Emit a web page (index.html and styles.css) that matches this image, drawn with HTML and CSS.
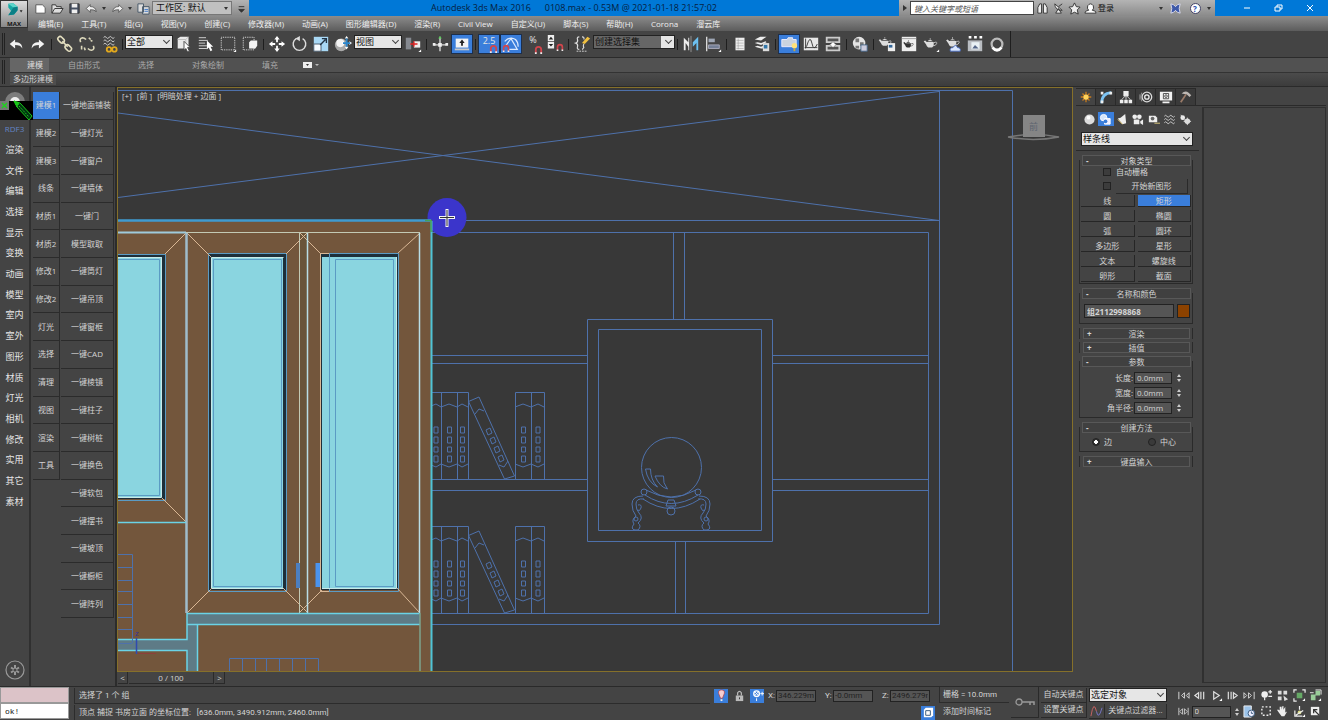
FILE: index.html
```
<!DOCTYPE html>
<html lang="zh-CN">
<head>
  <meta charset="UTF-8">
  <meta name="viewport" content="width=device-width, initial-scale=1.0">
  <title>Autodesk 3ds Max 2016 - 0108.max</title>
  <link rel="stylesheet" href="styles.css">
</head>
<body>

<!-- Shared icon shapes -->
<svg class="sprite" aria-hidden="true">
  <symbol id="undo" viewBox="0 0 20 20"><path d="M3 10l6-5v3c5 0 8 2 8 7-1-3-4-4-8-4v4z" fill="#f2f2f2"/></symbol>
  <symbol id="redo" viewBox="0 0 20 20"><path d="M17 10l-6-5v3c-5 0-8 2-8 7 1-3 4-4 8-4v4z" fill="#f2f2f2"/></symbol>
  <symbol id="teapot" viewBox="0 0 20 20"><path d="M5 8h9q1 5-2 7H7Q5 14 4 11L1 7l2-1zM6 7q3-3 7 0zM9 3h1v2H9z" fill="currentColor"/><path d="M14 9q5-2 4 1-1 3-5 3" fill="none" stroke="currentColor"/></symbol>
  <symbol id="magnet" viewBox="0 0 10 10"><path d="M2 9V5q0-3 3-3t3 3v4" fill="none" stroke="#d2454c" stroke-width="2"/><path d="M1 8h2v2H1zM7 8h2v2H7z" fill="#eee"/></symbol>
  <symbol id="waves" viewBox="0 0 20 20"><path d="M2 5q2-3 4 0t4 0 4 0 4 0M2 10q2-3 4 0t4 0 4 0 4 0M2 15q2-3 4 0t4 0 4 0 4 0" fill="none" stroke="currentColor" stroke-width="1.3"/></symbol>
</svg>

<div class="app">

  <!-- Title bar and menu -->
  <header class="header">
    <button class="logo" aria-label="MAX">
      <svg viewBox="0 0 28 28"><path d="M6 4l7-1 6 5v5l-5 6-8 1 4-6-4-5z" fill="#17a9a4"/><path d="M6 4l7-1 6 5-6 1z" fill="#5bd6cb"/><path d="M13 9l6-1v5l-5 6-8 1 4-6z" fill="#0c7f86"/><path d="M22 13h4l-2 3z" fill="#222"/></svg>
      <span>MAX</span>
    </button>
    <div class="header-rows">
      <div class="titlebar">
        <div class="quick">
          <button aria-label="新建"><svg viewBox="0 0 14 14"><path d="M2 3h7l3 3v6H2z" fill="#fff" stroke="#555"/></svg></button>
          <button aria-label="打开"><svg viewBox="0 0 14 14"><path d="M1 12V3h4l1 2h5v2M1 12l3-5h9l-3 5z" fill="#ddd" stroke="#333"/></svg></button>
          <button aria-label="保存"><svg viewBox="0 0 14 14"><path d="M2 2h10v10H2z" fill="#465062" stroke="#333"/><path d="M4 2h6v4H4zM4 8h6v4H4z" fill="#eee"/></svg></button>
          <button aria-label="撤消"><svg viewBox="0 0 20 20"><path d="M2 10l6-6v3c6 0 9 3 9 8-2-3-4-3-9-3v4z" fill="#eee" stroke="#333"/></svg></button>
          <i class="tri"></i>
          <button aria-label="重做"><svg viewBox="0 0 20 20"><path d="M18 10l-6-6v3c-6 0-9 3-9 8 2-3 4-3 9-3v4z" fill="#eee" stroke="#333"/></svg></button>
          <i class="tri"></i>
          <button aria-label="项目文件夹"><svg viewBox="0 0 14 14"><path d="M1 2h6v9H1zM6 5h7v8H6z" fill="#ddd" stroke="#456"/><path d="M8 8h4M8 10h4" stroke="#3874c8"/></svg></button>
          <button class="workspace-pick">工作区: 默认<i class="tri"></i></button>
          <button aria-label="自定义快速访问"><svg viewBox="0 0 14 14"><path d="M4 5h6M4 8h6l-3 3z" stroke="#333" fill="#333"/></svg></button>
        </div>
        <h1 class="title"><span>Autodesk 3ds Max 2016</span><span>0108.max - 0.53M @ 2021-01-18 21:57:02</span></h1>
        <div class="search">
          <i class="tri side"></i>
          <input type="text" placeholder="键入关键字或短语" aria-label="搜索">
          <button aria-label="查找"><svg viewBox="0 0 14 14"><path d="M2 12V6l2-4h2v10zM8 12V2h2l2 4v6z" fill="#eee" stroke="#333"/></svg></button>
          <button aria-label="通讯中心"><svg viewBox="0 0 14 14"><path d="M3 2q0 7 8 7zM4 12h6l-3-5zM7 5l4-3" fill="#eee" stroke="#333"/></svg></button>
          <button aria-label="收藏夹"><svg viewBox="0 0 14 14"><path d="M7 1l2 4 4 .5-3 3 1 4.500-4-2-4 2 1-4.500-3-3 4-.5z" fill="#eee" stroke="#333"/></svg></button>
          <button aria-label="帐户"><svg viewBox="0 0 14 14"><path d="M1 12q0-3 4-3-2-2-1-5 3-4 6 0 1 3-1 5 4 0 4 3z" fill="#fff" stroke="#333"/></svg></button>
          <button class="signin">登录<i class="tri"></i></button>
          <button aria-label="Exchange"><svg viewBox="0 0 14 14"><path d="M2 2l3 1 2 2 2-2 3-1-1 5 1 5-3-1-2-2-2 2-3 1 1-5z" fill="#3d58a8" stroke="#dde"/></svg></button>
          <button class="help" aria-label="帮助"><span>?</span></button>
          <i class="tri"></i>
        </div>
        <div class="window-buttons">
          <button aria-label="最小化"><svg viewBox="0 0 10 10"><path d="M2 5h6" stroke="#fff"/></svg></button>
          <button aria-label="还原"><svg viewBox="0 0 10 10"><path d="M2 4h5v4H2zM4 4V2h5v4H7" fill="none" stroke="#fff"/></svg></button>
          <button aria-label="关闭"><svg viewBox="0 0 10 10"><path d="M2 2l6 6M8 2L2 8" stroke="#fff"/></svg></button>
        </div>
      </div>
      <nav class="menu">
        <a href="#">编辑(E)</a><a href="#">工具(T)</a><a href="#">组(G)</a><a href="#">视图(V)</a><a href="#">创建(C)</a><a href="#">修改器(M)</a><a href="#">动画(A)</a><a href="#">图形编辑器(D)</a><a href="#">渲染(R)</a><a href="#">Civil View</a><a href="#">自定义(U)</a><a href="#">脚本(S)</a><a href="#">帮助(H)</a><a href="#">Corona</a><a href="#">溜云库</a>
      </nav>
    </div>
  </header>

  <!-- Main toolbar -->
  <div class="toolbar">
    <i class="grip"></i>
    <button aria-label="撤消"><svg><use href="#undo"/></svg></button>
    <button aria-label="重做"><svg><use href="#redo"/></svg></button>
    <i class="sep"></i>
    <button aria-label="链接"><svg viewBox="0 0 20 20"><g fill="none" stroke="#e4dfc0" stroke-width="1.800"><rect x="2" y="3" width="8" height="5" rx="2.500" transform="rotate(45 6 5)"/><rect x="10" y="12" width="8" height="5" rx="2.500" transform="rotate(45 14 14)"/><path d="M7 7l6 6"/></g></svg></button>
    <button aria-label="断开链接"><svg viewBox="0 0 20 20"><g fill="none" stroke="#dcd8bc" stroke-width="1.800"><path d="M3 8q-2-4 2-5 2 0 4 2M17 12q2 4-2 5-2 0-4-2M12 3l2 2M16 7l-2-1M4 12v4M8 17l-1-3"/></g></svg></button>
    <button aria-label="绑定到空间扭曲" class="light"><svg viewBox="0 0 20 20"><use href="#waves" width="20" height="15" y="-1"/><circle cx="10" cy="16" r="2.500" fill="none" stroke="#e3a91d" stroke-width="2"/><circle cx="16" cy="16" r="2.500" fill="none" stroke="#e3a91d" stroke-width="2"/></svg></button>
    <i class="sep"></i>
    <span class="drop"><select aria-label="选择过滤器"><option>全部</option></select></span>
    <button aria-label="选择对象"><svg viewBox="0 0 20 20"><path d="M3 4l3-2h9v10l-3 3H3z" fill="#e9e9e9"/><path d="M12 5v10M3 5h9l3-3" stroke="#bbb" fill="none"/><path d="M10 7l7 7h-3l2 4-2 1-2-4-2 2z" fill="#fff" stroke="#444"/></svg></button>
    <button aria-label="按名称选择"><svg viewBox="0 0 20 20"><path d="M2 3h8M2 6h10M2 9h7M2 12h9M2 15h9" stroke="#ddd"/><path d="M11 6l7 7h-3l2 4-2 1-2-4-2 2z" fill="#fff"/></svg></button>
    <button aria-label="选择区域"><svg viewBox="0 0 20 20"><path d="M2.500 2.500h15v14h-15z" fill="none" stroke="#eee" stroke-dasharray="1 1"/><path d="M19 16v3h-3z" fill="#fff"/></svg></button>
    <button aria-label="窗口/交叉"><svg viewBox="0 0 20 20"><path d="M2.500 2.500h12v14h-12z" fill="none" stroke="#eee" stroke-dasharray="1 1"/><path d="M9 8l2-2h7v6l-2 3H9z" fill="#f4f4f4"/></svg></button>
    <i class="sep"></i>
    <button aria-label="选择并移动"><svg viewBox="0 0 20 20"><path d="M10 1l3 4h-2v3H9V5H7zM10 19l3-4h-2v-3H9v3H7zM1 10l4-3v2h3v2H5v2zM19 10l-4-3v2h-3v2h3v2z" fill="#fff"/></svg></button>
    <button aria-label="选择并旋转"><svg viewBox="0 0 20 20"><path d="M7 4a7 7 0 1 0 7 0" fill="none" stroke="#ddd" stroke-width="1.600"/><path d="M11 1l-5 3 5 3z" fill="#ddd"/></svg></button>
    <button aria-label="选择并缩放"><svg viewBox="0 0 20 20"><path d="M2 2h16v16H2z" fill="#a8d8f5"/><path d="M2 10h8v8H2z" fill="#f6fbff" stroke="#456"/><path d="M9 11l6-6M11 4h5v5" fill="none" stroke="#234" stroke-width="1.500"/></svg></button>
    <button aria-label="选择并放置"><svg viewBox="0 0 20 20"><circle cx="8" cy="11" r="7" fill="#a9a9a9"/><circle cx="7" cy="9" r="4.500" fill="#f4f4f4"/><path d="M14 1l2 3h-4zM14 16l2-3h-4zM8 9l3-2v4zM20 9l-3-2v4z" fill="#fff"/><path d="M14 4v9M10 9h8" stroke="#2a86cc" stroke-width="2"/></svg></button>
    <span class="drop"><select aria-label="参考坐标系"><option>视图</option></select></span>
    <button aria-label="使用轴点中心"><svg viewBox="0 0 20 20"><path d="M2 3h6v13H2z" fill="#858990"/><path d="M11 7h7v7h-7z" fill="#eee"/><path d="M7 10h8M11 7v6" stroke="#d22" stroke-width="1.500"/><path d="M19 16v3h-3z" fill="#fff"/></svg></button>
    <i class="sep"></i>
    <button aria-label="选择并操纵"><svg viewBox="0 0 20 20"><path d="M10 2v16M3 11h14" stroke="#ddd" stroke-width="1.500"/><path d="M8 9h4v4H8zM2 9h3v3H2zM16 9h3v3h-3z" fill="#eee"/><path d="M8 4l2-3 2 3z" fill="#5c5"/></svg></button>
    <button class="on" aria-label="键盘快捷键覆盖切换"><svg viewBox="0 0 20 20"><path d="M3 4h14v10H3z" fill="#f4f4f4"/><path d="M2 15h16v2H2z" fill="#c9c9c9"/><path d="M10 5l3 4h-2v3H9V9H7z" fill="#222"/></svg></button>
    <i class="sep"></i>
    <button class="on snap" aria-label="2.5 维捕捉">2.5<svg class="mag"><use href="#magnet"/></svg></button>
    <button class="on snap" aria-label="角度捕捉"><svg viewBox="0 0 20 20"><path d="M4 12L10 4l7 12H8M3 7q6-6 12-2 3 3 3 8" fill="none" stroke="#dceaff" stroke-width="1.300"/><use href="#magnet" width="9" height="9" y="10"/></svg></button>
    <button class="snap" aria-label="百分比捕捉">%<svg class="mag"><use href="#magnet"/></svg></button>
    <button class="snap" aria-label="微调器捕捉"><svg viewBox="0 0 20 20"><path d="M2 1h7v7H2zM2 9h7v7H2z" fill="#eee"/><path d="M3 6l2.500-3L8 6zM3 11l2.500 3L8 11z" fill="#222"/><use href="#magnet" width="9" height="9" x="11" y="10"/></svg></button>
    <i class="sep"></i>
    <button aria-label="编辑命名选择集"><svg viewBox="0 0 20 20"><path d="M7 2Q4 2 5 5t-2 4q3 1 2 4t2 3M10 2q3 0 2 3M12 10q-1 2 0 4-1 2-2 2" fill="none" stroke="#ddd" stroke-width="1.300"/><path d="M10 9l6-7 3 2-6 6z" fill="#f0c040"/><path d="M4 18h11" stroke="#ddd" stroke-dasharray="2 1"/></svg></button>
    <span class="drop sets"><select aria-label="命名选择集"><option>创建选择集</option></select></span>
    <i class="sep"></i>
    <button aria-label="镜像"><svg viewBox="0 0 20 20"><path d="M2 3l5 5V3h1v14H7v-4L4 9v8H2z" fill="#eee"/><path d="M10 1v18" stroke="#999"/><path d="M18 2v15h-2V9l-4 4v4-9z" fill="#6cc0f0"/></svg></button>
    <button aria-label="对齐"><svg viewBox="0 0 20 20"><path d="M3 2v16" stroke="#ddd" stroke-width="1.500"/><path d="M5 4h7v4H5z" fill="#9fa7b6"/><path d="M5 11h12v4H5z" fill="#747f96" stroke="#aab"/><path d="M19 16v3h-3z" fill="#fff"/></svg></button>
    <i class="sep"></i>
    <button aria-label="图层"><svg viewBox="0 0 20 20"><path d="M5 3h10v14H5z" fill="#eee"/><path d="M6 6h8M6 9h8M6 12h8M6 15h8M8 4v12" stroke="#999" stroke-width=".6"/></svg></button>
    <button aria-label="层管理器"><svg viewBox="0 0 20 20"><path d="M2 5l6-3h7l-6 4zM2 9l3-1 4 1 5-2 1 1-6 3zM2 13l3-1 4 1 2-1v3H9z" fill="#eee"/><path d="M11 9h7v9h-7z" fill="#ddd"/><path d="M12 11h4v4h-4z" fill="#37a"/></svg></button>
    <i class="sep"></i>
    <button class="on" aria-label="功能区"><svg viewBox="0 0 20 20"><path d="M2 5h6l1-2h5v2h4v8H2z" fill="#c9d3df" stroke="#eef"/><circle cx="16" cy="12" r="3" fill="#ffe27a"/><path d="M15 15h2v3h-2z" fill="#c9a63a"/></svg></button>
    <button aria-label="曲线编辑器"><svg viewBox="0 0 20 20"><path d="M2 3h16v14H2z" fill="#e6e6e6"/><path d="M4 15V4M3 14h14M5 13Q9-1 11 9t6 1" fill="none" stroke="#333"/></svg></button>
    <button aria-label="图解视图"><svg viewBox="0 0 20 20"><path d="M2 2h16v7H2zM2 11h16v7H2z" fill="#ccc"/><path d="M4 4h12v3H4zM4 13h12v3H4z" fill="#555"/><path d="M8 8h4v2h2l-4 4-4-4h2z" fill="#fff" stroke="#444" stroke-width=".5"/></svg></button>
    <i class="sep"></i>
    <button aria-label="材质编辑器"><svg viewBox="0 0 20 20"><circle cx="9" cy="9" r="7" fill="#e4e4e4"/><path d="M5 4h4v4H5zM10 8h4v4h-4zM5 12h4v3H5z" fill="#777"/><path d="M11 11h7v7h-7z" fill="#ccd" stroke="#468"/></svg></button>
    <i class="sep"></i>
    <button aria-label="渲染设置" class="light"><svg viewBox="0 0 20 20"><use href="#teapot" width="16" height="16"/><path d="M11 9h8v9h-8z" fill="#eee"/><path d="M12 11h4v3h-4z" fill="#369"/></svg></button>
    <button aria-label="渲染帧窗口" class="dark"><svg viewBox="0 0 20 20"><path d="M2 2h16v16H2z" fill="#eee"/><path d="M2 4h16" stroke="#999"/><use href="#teapot" x="3" y="4" width="13" height="13"/></svg></button>
    <button aria-label="渲染产品" class="light"><svg viewBox="0 0 20 20"><use href="#teapot" x="1" y="1" width="17" height="17"/><path d="M19 16v3h-3z" fill="#fff"/></svg></button>
    <button aria-label="云渲染" class="light"><svg viewBox="0 0 20 20"><use href="#teapot" width="20" height="17"/><path d="M7 18q-1-4 3-4 3-5 5 0 4 0 3 4z" fill="#dce8ff" stroke="#4668b8"/></svg></button>
    <button aria-label="渲染库"><svg viewBox="0 0 20 20"><path d="M3 1h3v3H3zM9 1h3v3H9zM15 1h3v3h-3z" fill="#fff"/><path d="M2 6h16v12H2z" fill="#b9bdc2"/><path d="M6 8h9v8H6z" fill="#e9f1f5"/><path d="M7 15l3-4 4 4z" fill="#568"/></svg></button>
    <button aria-label="Corona"><svg viewBox="0 0 20 20"><circle cx="10" cy="10" r="6" fill="none" stroke="#bbb" stroke-width="2.500"/><path d="M5 14q5 6 10 0" fill="none" stroke="#fff" stroke-width="3"/></svg></button>
    <i class="sep end"></i>
  </div>

  <!-- Ribbon -->
  <div class="ribbon">
    <i class="grip"></i>
    <div class="ribbon-body">
      <div class="ribbon-tabs">
        <button class="active">建模</button><button>自由形式</button><button>选择</button><button>对象绘制</button><button>填充</button>
        <button class="ribbon-min" aria-label="最小化功能区"><svg viewBox="0 0 18 8"><path d="M1 1h9v6H1z" fill="#eee"/><path d="M4 3h3L5.500 5z" fill="#333"/><path d="M13 3h4l-2 2z" fill="#bbb"/></svg></button>
      </div>
      <div class="ribbon-panel"><button>多边形建模</button></div>
    </div>
  </div>

  <main class="work">

    <!-- Script categories -->
    <aside class="rail">
      <button class="rail-logo" aria-label="关闭"><svg viewBox="0 0 34 34"><circle cx="15" cy="15" r="10" fill="#7d7d7d"/><circle cx="15" cy="15" r="5" fill="#eee"/><path d="M0 14h33v19H0z" fill="#000"/><path d="M0 14h9v9H0z" fill="#777"/><path d="M2 16l5 5M7 16l-5 5" stroke="#1fd01f" stroke-width="1.500"/><path d="M14 14l6 2 12 13-3 4-12-13z" fill="#031" stroke="#18c818"/><path d="M14 14l5 2-2 4zM19 19l10 11" fill="#18c818" stroke="#18c818" stroke-dasharray="2 1"/></svg></button>
      <div class="rail-list">
        <button class="brand">RDF3</button>
        <button>渲染</button><button>文件</button><button>编辑</button><button>选择</button><button>显示</button><button>变换</button><button>动画</button><button>模型</button><button>室内</button><button>室外</button><button>图形</button><button>材质</button><button>灯光</button><button>相机</button><button>修改</button><button>实用</button><button>其它</button><button>素材</button>
      </div>
      <button class="gear" aria-label="设置"><svg viewBox="0 0 20 20"><circle cx="10" cy="10" r="9" fill="none" stroke="#999" stroke-width="1.200"/><path d="M10 5v10M6 7.500l8 5M14 7.500l-8 5" stroke="#999" stroke-width="2"/><circle cx="10" cy="10" r="1.500" fill="#444"/></svg></button>
    </aside>

    <!-- One-key commands -->
    <aside class="commands">
      <div class="command-col groups">
        <button class="on">建模1</button><button>建模2</button><button>建模3</button><button>线条</button><button>材质1</button><button>材质2</button><button>修改1</button><button>修改2</button><button>灯光</button><button>选择</button><button>清理</button><button>视图</button><button>渲染</button><button>工具</button>
      </div>
      <div class="command-col">
        <button>一键地面铺装</button><button>一键灯光</button><button>一键窗户</button><button>一键墙体</button><button>一键门</button><button>模型取取</button><button>一键筒灯</button><button>一键吊顶</button><button>一键窗框</button><button>一键CAD</button><button>一键棱镜</button><button>一键柱子</button><button>一键树桩</button><button>一键换色</button><button>一键软包</button><button>一键摆书</button><button>一键坡顶</button><button>一键橱柜</button><button>一键阵列</button>
      </div>
    </aside>

    <!-- Viewport -->
    <section class="stage">
      <div class="viewport">
        <svg class="scene" viewBox="118 88 954 583" preserveAspectRatio="xMinYMin slice">
          <g class="wire">
            <path d="M118 90.500H1012.500V672M939.500 90.500V624.500H431M118 113L939 220.500M118 197.500L939 91.500M431 220.500H939"/>
            <path d="M431 232.500H928.500V613.500H431M673.500 232V320M684.500 232V320M675.500 541V613M685.500 541V613"/>
            <path d="M587.500 319.500H772.500V541.500H587.500zM598.500 329.500H761.500V530.500H598.500z"/>
            <path d="M431 355.500H587M431 363.500H587M772 355.500H928M772 363.500H928M431 479.500H587M431 490.500H587M772 479.500H928M772 490.500H928"/>
            <!-- Books, one row per shelf -->
            <g id="books">
              <path d="M431 392.500H468.500V479M441.500 392V479M457.500 392V479M515.500 479V392.500H544.500V479M531.500 392V479"/>
              <path d="M431 406l5-2 5 3 8-3 8 3 5-3 6 3M431 465l5 2 5-3 8 3 8-3 5 3 6-3M515 407l8-3 8 3 7-3 6 3M515 464l8 3 8-3 7 3 6-3"/>
              <path d="M434 427h4v6h-4zm0 10h4v6h-4zm0 10h4v5h-4zm0 9h4v6h-4zM447.500 427h4v6h-4zm0 10h4v6h-4zm0 10h4v5h-4zm0 9h4v6h-4zM460.500 427h4v6h-4zm0 10h4v6h-4zm0 10h4v5h-4zm0 9h4v6h-4zM521.500 427h4v6h-4zm0 10h4v6h-4zm0 10h4v5h-4zm0 9h4v6h-4zM536 427h4v6h-4zm0 10h4v6h-4zm0 10h4v5h-4zm0 9h4v6h-4z"/>
              <path d="M468.500 401.500L479 397l35.500 79-10 3zM475 414l4-5 5 2M499 465l5 2 4-6"/>
              <path d="M486 430l4-2 2 5-4 2zm4 9l4-2 2 5-4 2zm4 9l4-2 2 5-4 2zm4 9l4-2 2 5-4 2z"/>
            </g>
            <use href="#books" y="134"/>
            <!-- Crystal ball and its stand -->
            <circle cx="671.500" cy="467.500" r="30"/>
            <path d="M645.500 469h5q0 11 7 18-10-5-12-18zM655 476h8.500q-1 7 4 13-8-2-12.500-13z"/>
            <path d="M645 495q26 17 53 0M643 499q28 19 57 0M646 490q25 14 50 0"/>
            <circle cx="644" cy="492" r="3"/><circle cx="698" cy="492" r="3"/><circle cx="671" cy="511" r="4"/>
            <path d="M668 500h6l2 6h-10zM643 496q-11 0-11 8 0 7 4 12-5 4-2 8-4 5 1 6h3q4-4 0-7 6-5 1-10-3-3-3-9t8-5M699 496q11 0 11 8 0 7-4 12 5 4 2 8 4 5-1 6h-3q-4-4 0-7-6-5-1-10 3-3 3-9t-8-5M638 505q4-1 3 3t-4 2M704 505q-4-1-3 3t4 2"/>
            <circle cx="636" cy="519" r="2"/><circle cx="706" cy="519" r="2"/>
          </g>

          <circle cx="447" cy="217.500" r="19.500" fill="#3b35cb"/>

          <!-- Cabinet -->
          <path d="M118 220H432V672H118z" fill="#73563c"/>
          <path d="M300 233h8v380h-8z" fill="#69543a"/>
          <path d="M187 614H420V624.500H197V672H187V650H118V639.500H187z" fill="#5e7b86"/>
          <g fill="#1d2f3a">
            <path d="M118 254H165V499H118zM209 254H286V590H209zM321 254H399V590H321z"/>
          </g>
          <g fill="#8ad5e0">
            <path d="M118 257H162V497H118zM211.500 257.500H283V588H211.500zM322 257H396.500V588H322z"/>
          </g>
          <g class="wire pane">
            <path d="M118 259.500H159.500V495.500H118M213.500 259.500H281.500V586.500H213.500zM335.500 259.500H393.500V586.500H335.500zM329.500 254V592"/>
            <path d="M118 254.500H165.500V500.500H118M208.500 253.500H286.500V591.500H208.500zM320.500 253.500H398.500V591.500H320.500z"/>
          </g>
          <g fill="none" stroke="#c9e9ea">
            <path d="M118 257.500H161.500V497.500H118M211.500 588V257.500H283.500M211.500 588.500H283M322 588.500H396.500V257"/>
          </g>
          <g fill="none" stroke="#d9b795">
            <path d="M165 254l21-21M162 498l24 24M187 233l24 24M286 254l21-21M212 588l-25 25M283 588l25 25M300 233l21 21M398 253l22-20M322 590l-23 23M397 588l22 24M320.500 591V253.500H329M320 591.500h9"/>
          </g>
          <path d="M299.500 233V613M118 232.500H420" fill="none" stroke="#c3c9b4"/>
          <path d="M118 232.500H186" stroke="#9fcbdc" stroke-width="2"/>
          <path d="M186.500 233V613" stroke="#9fbccb" stroke-width="2.500"/>
          <path d="M307.500 233V613M419.500 233V613" stroke="#b9dde6" stroke-width="1.500"/>
          <g fill="none" stroke="#6ad3e6" stroke-width="1.500">
            <path d="M118 522.500H186M187 613.500H420M187 624.500H420M197.500 625V672M118 639.500H187V613M118 650.500H187V672"/>
          </g>
          <path d="M420 613V672" stroke="#7da58e" stroke-width="1.500"/>
          <path d="M118 220.500H431" stroke="#3f9bd0" stroke-width="2.500"/>
          <path d="M431.500 221V672" stroke="#4fc3d6" stroke-width="2"/>
          <path d="M425 220.500H431V232" fill="none" stroke="#46a05a" stroke-width="1.500"/>
          <path d="M296 563h4v25h-4z" fill="#4c7fc0"/><path d="M315.500 563h4.500v24h-4.500z" fill="#4a93ee"/>
          <g class="wire">
            <path d="M118 554.500H132.500V643M118 567.500H132M118 580.500H132M118 591.500H132M118 604.500H132M118 617.500H132M118 629.500H132M118 643.500H132"/>
            <path d="M229.500 672V658.500H318.500V672M242.500 658V672M255.500 658V672M266.500 658V672M279.500 658V672M292.500 658V672M305.500 658V672"/>
          </g>
          <path d="M136.500 638V654" stroke="#2f4bb0" stroke-width="1.500"/><path d="M138 653.500H156" stroke="#8c3f3a"/>
          <text x="135" y="636" font-size="8" fill="#33309c">z</text>

          <!-- Cursor -->
          <path d="M447 209V227M439 217.500H455" stroke="#f4f4f4" stroke-width="3"/><path d="M447 210V226M440 217.500H454" stroke="#333"/>

          <!-- View cube -->
          <path d="M1008 137q26-5 51 0-26 5-51 0" fill="none" stroke="#777" stroke-width="1.500"/>
          <path d="M1023 115h22v22h-22z" fill="#858585"/>
          <text x="1029" y="130" font-size="9" fill="#5d6470">前</text>
        </svg>
        <div class="viewport-label"><span>[+]</span><span>[前 ]</span><span>[明暗处理 + 边面 ]</span></div>
      </div>
      <div class="timeline">
        <button aria-label="上一帧">&lt;</button><button class="frame">0 / 100</button><button aria-label="下一帧">&gt;</button>
      </div>
    </section>

    <!-- Command panel -->
    <aside class="panel">
      <div class="panel-tabs">
        <button class="active" aria-label="创建"><svg viewBox="0 0 16 16"><path d="M8 2v12M2 8h12M4 4l8 8M12 4l-8 8" stroke="#c77a1c" stroke-width="1.500"/><circle cx="8" cy="8" r="3" fill="#ffd35a"/></svg></button>
        <button aria-label="修改"><svg viewBox="0 0 16 16"><path d="M3 15Q3 4 14 3" fill="none" stroke="#7cc4f4" stroke-width="3"/><path d="M2 2h3v3H2zM12 2h3v3h-3zM2 12h3v3H2z" fill="#eee"/></svg></button>
        <button aria-label="层次"><svg viewBox="0 0 16 16"><path d="M5 1h6v6H5zM1 11h4v4H1zM6 11h4v4H6zM11 11h4v4h-4z" fill="#eee"/><path d="M8 6v5M8 6l-5 5M8 6l5 5" stroke="#ddd"/></svg></button>
        <button aria-label="运动"><svg viewBox="0 0 16 16"><circle cx="9" cy="8" r="5.500" fill="none" stroke="#ddd" stroke-width="1.500"/><circle cx="9" cy="8" r="2.500" fill="none" stroke="#eee" stroke-width="1.500"/><path d="M3 3q-2 5 0 10M1 5v6" stroke="#999" fill="none"/></svg></button>
        <button aria-label="显示"><svg viewBox="0 0 16 16"><path d="M1 2h14v10H1zM4 13h8v2H4z" fill="#f2f2f2"/><path d="M5 4h6v6H5z" fill="none" stroke="#444"/><circle cx="8" cy="7" r="1.500" fill="none" stroke="#444"/></svg></button>
        <button aria-label="实用程序"><svg viewBox="0 0 16 16"><path d="M3 4q4-4 8-1l3 3-2 2-3-3z" fill="#bdb8b4"/><path d="M8 5l-6 9" stroke="#9a7a68" stroke-width="2"/></svg></button>
      </div>
      <div class="panel-body">
        <div class="panel-main">
          <div class="kinds">
            <button aria-label="几何体"><svg viewBox="0 0 14 14"><circle cx="7" cy="7" r="5.500" fill="#dcdcdc"/><circle cx="6" cy="5" r="2" fill="#fff"/></svg></button>
            <button class="on" aria-label="图形"><svg viewBox="0 0 14 14"><circle cx="5" cy="5" r="3.500" fill="#d5e5fb" stroke="#fff"/><path d="M6 6h6v6H6z" fill="#eef" stroke="#fff"/><circle cx="7" cy="9" r="2" fill="#357bd8"/></svg></button>
            <button aria-label="灯光"><svg viewBox="0 0 14 14"><path d="M11 1l1 10-4 1-5-6 3-1z" fill="#eee"/><path d="M3 7l5 5" stroke="#e3c56a"/></svg></button>
            <button aria-label="摄影机"><svg viewBox="0 0 14 14"><circle cx="4" cy="4" r="2.500" fill="#eee"/><circle cx="9" cy="4" r="2.500" fill="#eee"/><path d="M3 7h6v5H3zM10 9l3-2v6l-3-2z" fill="#eee"/></svg></button>
            <button aria-label="辅助对象"><svg viewBox="0 0 14 14"><path d="M2 3h7l2 2v5H2z" fill="#eee"/><circle cx="6" cy="6" r="2" fill="#666"/><path d="M8 11h6" stroke="#ddc97c"/></svg></button>
            <button class="light" aria-label="空间扭曲"><svg><use href="#waves"/></svg></button>
            <button aria-label="系统"><svg viewBox="0 0 14 14"><circle cx="4" cy="5" r="2.500" fill="#eee"/><circle cx="9" cy="9" r="3" fill="#ddd"/><path d="M9 5v8M5 9h8M2 2l4 6" stroke="#ddd"/></svg></button>
          </div>
          <span class="drop wide"><select aria-label="图形类别"><option>样条线</option></select></span>
          <hr>

          <section class="rollup">
            <h2><span>-</span>对象类型</h2>
            <div class="rollup-body types">
              <label class="check"><input type="checkbox">自动栅格</label>
              <div class="start"><input type="checkbox" aria-label="开始新图形"><button>开始新图形</button></div>
              <div class="type-grid">
                <button>线</button><button class="on">矩形</button>
                <button>圆</button><button>椭圆</button>
                <button>弧</button><button>圆环</button>
                <button>多边形</button><button>星形</button>
                <button>文本</button><button>螺旋线</button>
                <button>卵形</button><button>截面</button>
              </div>
            </div>
          </section>

          <section class="rollup">
            <h2><span>-</span>名称和颜色</h2>
            <div class="rollup-body name-row">
              <input type="text" value="组2112998868" aria-label="名称"><button class="swatch" aria-label="颜色"></button>
            </div>
          </section>

          <section class="rollup closed"><h2><span>+</span>渲染</h2></section>
          <section class="rollup closed"><h2><span>+</span>插值</h2></section>

          <section class="rollup">
            <h2><span>-</span>参数</h2>
            <div class="rollup-body params">
              <label>长度:<input type="text" value="0.0mm"><i class="spin"></i></label>
              <label>宽度:<input type="text" value="0.0mm"><i class="spin"></i></label>
              <label>角半径:<input type="text" value="0.0mm"><i class="spin"></i></label>
            </div>
          </section>

          <section class="rollup">
            <h2><span>-</span>创建方法</h2>
            <div class="rollup-body method">
              <label><input type="radio" name="method" checked>边</label>
              <label><input type="radio" name="method">中心</label>
            </div>
          </section>

          <section class="rollup closed"><h2><span>+</span>键盘输入</h2></section>
        </div>
        <div class="panel-side"></div>
      </div>
    </aside>
  </main>

  <!-- Status bar -->
  <footer class="status">
    <div class="listener">
      <input type="text" class="pink" aria-label="宏录制器">
      <input type="text" value="ok!" aria-label="侦听器">
    </div>
    <div class="messages">
      <div class="status-row">
        <p class="well">选择了 1 个 组</p>
        <button class="on" aria-label="孤立当前选择"><svg viewBox="0 0 14 14"><path d="M7 1q4 0 3 4L8 10H6L4 5q-1-4 3-4z" fill="#f6cdd2" stroke="#b33" stroke-width=".7"/><path d="M6 11h2v2H6z" fill="#eee"/></svg></button>
        <button aria-label="选择锁定"><svg viewBox="0 0 14 14"><path d="M3 7h8v6H3z" fill="#bbb"/><path d="M5 7V4q2-3 4 0v3" fill="none" stroke="#bbb" stroke-width="1.300"/><path d="M7 9v2" stroke="#333"/></svg></button>
        <button class="on" aria-label="绝对模式"><svg viewBox="0 0 14 14"><circle cx="6" cy="5" r="3" fill="none" stroke="#fff" stroke-width="1.500"/><path d="M4 3l4 4M8 3L4 7M10 5h4M12 3v4M6 10v3" stroke="#fff"/></svg></button>
        <label>X:<input type="text" value="346.229mm"></label>
        <label>Y:<input type="text" value="-0.0mm"></label>
        <label>Z:<input type="text" value="2496.279mm"></label>
      </div>
      <div class="status-row">
        <p class="well">顶点 捕捉 书房立面 的坐标位置:&nbsp;&nbsp; [636.0mm, 3490.912mm, 2460.0mm]</p>
        <button class="on" aria-label="自适应降级"><svg viewBox="0 0 14 14"><path d="M2 4l2-2h8v8l-2 2H2z" fill="#fff"/><path d="M4 5h5v5H4z" fill="#fff" stroke="#357"/></svg></button>
      </div>
    </div>
    <div class="grid-info">
      <p class="well">栅格 = 10.0mm</p>
      <button>添加时间标记</button>
    </div>
    <button class="key" aria-label="设置关键点"><svg viewBox="0 0 20 10"><circle cx="4" cy="5" r="3" fill="none" stroke="#999" stroke-width="1.300"/><path d="M7 5h12v3M15 5v3" fill="none" stroke="#999" stroke-width="1.500"/></svg></button>
    <div class="keys">
      <button>自动关键点</button>
      <button>设置关键点</button>
    </div>
    <div class="keys filters">
      <span class="drop"><select aria-label="关键点对象"><option>选定对象</option></select></span>
      <div class="filter-row">
        <button aria-label="切线"><svg viewBox="0 0 14 14"><path d="M1 12Q4-6 7 7" fill="none" stroke="#c66"/><path d="M7 7q2 10 6-4" fill="none" stroke="#77c"/></svg></button>
        <button>关键点过滤器...</button>
      </div>
    </div>
    <div class="playback">
      <button aria-label="转至开头"><svg viewBox="0 0 14 14"><path d="M2 3v8M8 4L5 7l3 3zM13 4l-3 3 3 3z" stroke="#ddd" fill="none"/></svg></button>
      <button aria-label="上一帧"><svg viewBox="0 0 14 14"><path d="M6 4L2 7l4 3zM8.500 3v8M11.500 3v8" stroke="#ddd" fill="none" stroke-width="1.300"/></svg></button>
      <button aria-label="播放"><svg viewBox="0 0 14 14"><path d="M4 3l6 4-6 4z" stroke="#ddd" fill="none" stroke-width="1.300"/><path d="M13 10v3h-3z" fill="#fff"/></svg></button>
      <button aria-label="下一帧"><svg viewBox="0 0 14 14"><path d="M8 4l4 3-4 3zM5.500 3v8M2.500 3v8" stroke="#ddd" fill="none" stroke-width="1.300"/></svg></button>
      <button aria-label="转至结尾"><svg viewBox="0 0 14 14"><path d="M12 3v8M6 4l3 3-3 3zM1 4l3 3-3 3z" stroke="#ddd" fill="none"/></svg></button>
      <button aria-label="缩放"><svg viewBox="0 0 14 14"><circle cx="5" cy="6" r="3.500" fill="#eee"/><path d="M5 9v3M9 3h4M11 1v4M9 8h4" stroke="#eee" stroke-width="1.300"/></svg></button>
      <button aria-label="缩放所有视图"><svg viewBox="0 0 14 14"><path d="M2 2h4v4H2zM8 2h4v4H8zM2 8h4v4H2zM8 7l5 4-4 2z" fill="#ddd"/></svg></button>
      <button aria-label="最大化显示"><svg viewBox="0 0 14 14"><path d="M4 4h6v6H4z" fill="#6a6"/><path d="M1 4V1h3M10 1h3v3M1 10v3h3" fill="none" stroke="#eee" stroke-width="1.300"/><path d="M13 10v3h-3z" fill="#fff"/></svg></button>
      <button aria-label="所有视图最大化显示"><svg viewBox="0 0 14 14"><path d="M2 6h5v6H2zM7 2h5v5H7z" fill="#9c9"/><path d="M1 4h4M7 1h6v5" fill="none" stroke="#eee"/><path d="M13 10v3h-3z" fill="#fff"/></svg></button>
      <button aria-label="关键点模式"><svg viewBox="0 0 14 14"><path d="M2 3v8M12 3v8M6 4L3 7l3 3zM8 4l3 3-3 3z" stroke="#ccc" fill="none"/></svg></button>
      <span class="frame-field"><input type="text" value="0" aria-label="当前帧"><i class="spin"></i></span>
      <button aria-label="时间配置"><svg viewBox="0 0 14 14"><path d="M1 1h8v12H1z" fill="#9cc4ea" stroke="#eee"/><circle cx="9" cy="9" r="3.500" fill="#eef" stroke="#357"/><path d="M9 7v2h2" stroke="#357" fill="none"/></svg></button>
      <button aria-label="缩放区域"><svg viewBox="0 0 14 14"><path d="M2 2h9v9H2z" fill="none" stroke="#eee" stroke-width="1.500" stroke-dasharray="2 2"/></svg></button>
      <button aria-label="平移"><svg viewBox="0 0 14 14"><path d="M3 8L1 5h2l1 1V2h2v3l1-4h1v4l2-3v6l2-1-3 5H6z" fill="#eee"/></svg></button>
      <button aria-label="环绕"><svg viewBox="0 0 14 14"><circle cx="7" cy="8" r="2" fill="#dd8"/><path d="M7 1v4M3 11l8-5M2 6v6h8" fill="none" stroke="#eee" stroke-width="1.300"/><path d="M13 10v3h-3z" fill="#fff"/></svg></button>
      <button aria-label="最大化视口"><svg viewBox="0 0 14 14"><path d="M2 2h9v9H2z" fill="#eee"/><path d="M5 5l6 6M5 9V5h4" fill="none" stroke="#333" stroke-width="1.300"/></svg></button>
    </div>
  </footer>
</div>

</body>
</html>
```

FILE: styles.css
```
* {
  box-sizing: border-box;
}
body {
  margin: 0;
  background: #444;
  color: #d4d4d4;
  font-family: "Open Sans", "Noto Sans CJK SC", sans-serif;
  font-size: 8px;
  line-height: 12px;
}
button, input, select {
  margin: 0;
  padding: 0;
  border: 0;
  border-radius: 0;
  background: none;
  color: inherit;
  font: inherit;
  outline: none;
}
button {
  display: flex;
  align-items: center;
  justify-content: center;
  white-space: nowrap;
}
input {
  min-width: 0;
}
h1, h2, p {
  margin: 0;
  font-size: 8px;
  font-weight: 400;
}
a {
  color: inherit;
  text-decoration: none;
}
svg {
  display: block;
  flex: none;
}
.sprite {
  position: absolute;
  width: 0;
  height: 0;
}
.app {
  display: flex;
  flex-direction: column;
  min-height: 100vh;
}
.on {
  background: #3a7edb;
}
.light {
  color: #ddd;
}
.dark {
  color: #333;
}
.tri {
  border: 2px solid transparent;
  border-top: 3px solid #333;
  border-bottom: 0;
}
.tri.side {
  border: 3px solid transparent;
  border-left: 4px solid #333;
  border-right: 0;
}

/* Header */
.header {
  display: flex;
  height: 31px;
}
.logo {
  flex-direction: column;
  width: 28px;
  height: 28px;
  background: linear-gradient(#ddd, #888);
  border: 1px solid #333;
  color: #111;
  font-size: 6px;
  font-weight: 700;
  line-height: 7px;
}
.logo svg {
  width: 26px;
  height: 20px;
}
.header-rows {
  flex: 1;
  min-width: 0;
}
.titlebar {
  display: flex;
  height: 16px;
  background: #0078d7;
}
.quick, .search {
  display: flex;
  align-items: center;
  background: linear-gradient(#b4b4b4, #8a8a8a);
  color: #111;
}
.quick {
  width: 221px;
  padding-left: 4px;
  gap: 1px;
}
.quick button, .search button {
  width: 16px;
  height: 16px;
}
.quick svg, .search svg {
  width: 13px;
  height: 13px;
}
.quick > .tri {
  margin: 0 2px;
}
.quick .workspace-pick {
  flex: 1;
  justify-content: space-between;
  height: 14px;
  padding: 0 3px;
  border: 1px solid #777;
  background: #c0c0c0;
  font-size: 9px;
}
.title {
  flex: 1;
  display: flex;
  justify-content: center;
  gap: 14px;
  color: #06213f;
  font-size: 9px;
  line-height: 16px;
  white-space: nowrap;
}
.search {
  width: 316px;
  padding: 0 4px;
}
.search input {
  width: 124px;
  height: 14px;
  margin-left: 3px;
  padding: 0 3px;
  border: 1px solid #444;
  background: #fff;
  font-style: italic;
}
.search input::placeholder {
  color: #555;
}
.search .signin {
  flex: 1;
  justify-content: space-between;
  padding-right: 4px;
}
.search .help {
  width: 24px;
}
.help span {
  width: 11px;
  height: 11px;
  border-radius: 50%;
  background: #fff;
  border: 1px solid #446;
  color: #224cae;
  font-weight: 700;
  line-height: 9px;
}
.window-buttons {
  display: flex;
  align-items: center;
  justify-content: space-around;
  width: 113px;
  padding: 0 2px 0 16px;
}
.window-buttons svg {
  width: 10px;
  height: 10px;
}
.menu {
  display: flex;
  gap: 18px;
  height: 15px;
  padding-left: 10px;
  background: linear-gradient(#8c8c8c, #5c5c5c);
  color: #eee;
  line-height: 16px;
  white-space: nowrap;
}

/* Toolbar */
.toolbar {
  display: flex;
  align-items: center;
  height: 27px;
  border-bottom: 1px solid #2b2b2b;
}
.grip {
  width: 3px;
  margin: 2px 0 2px 2px;
  align-self: stretch;
  border: 1px solid #222;
  border-width: 0 1px;
}
.toolbar button {
  width: 22px;
  height: 20px;
}
.toolbar .on {
  border: 1px solid #1d2f4c;
}
.toolbar svg {
  width: 18px;
  height: 18px;
}
.sep {
  width: 1px;
  height: 11px;
  margin: 0 2px;
  background: #1e1e1e;
}
.sep.end {
  height: 26px;
}
.toolbar .snap {
  position: relative;
  color: #e4e4e4;
  font-size: 9px;
  align-items: flex-start;
}
.toolbar .snap .mag {
  position: absolute;
  right: 1px;
  bottom: 0;
  width: 9px;
  height: 9px;
}
.drop {
  position: relative;
  display: block;
  width: 48px;
  color: #111;
}
.drop::after {
  content: "";
  position: absolute;
  top: 3px;
  right: 4px;
  width: 4px;
  height: 4px;
  border: solid #444;
  border-width: 0 1px 1px 0;
  transform: rotate(45deg);
}
.drop select {
  display: block;
  width: 100%;
  height: 14px;
  padding-left: 1px;
  border: 1px solid #222;
  background: #e6e6e6;
  appearance: none;
  font-size: 9px;
  line-height: 12px;
}
.toolbar .drop {
  margin-bottom: 4px;
}
.drop.sets {
  width: 82px;
}
.drop.sets select {
  background: linear-gradient(90deg, #666 84%, #e6e6e6 84%);
}

/* Ribbon */
.ribbon {
  display: flex;
  height: 28px;
  background: #444;
}
.ribbon-body {
  flex: 1;
  margin-left: 5px;
}
.ribbon-tabs {
  display: flex;
  height: 15px;
  background: #515151;
  border-bottom: 1px solid #333;
  color: #aaa;
}
.ribbon-tabs button {
  padding: 0 19px;
}
.ribbon-tabs .active {
  padding: 0 6px 0 17px;
  background: #666;
  color: #ddd;
}
.ribbon-tabs .ribbon-min {
  padding: 0 5px;
}
.ribbon-min svg {
  width: 18px;
  height: 8px;
}
.ribbon-panel {
  height: 13px;
  background: linear-gradient(#4b4b4b, #3c3c3c);
}
.ribbon-panel button {
  height: 12px;
  padding: 0 3px;
  background: #4e4e4e;
}

/* Work area */
.work {
  flex: 1;
  display: flex;
  border-top: 1px solid #2a2a2a;
}
.rail {
  display: flex;
  flex-direction: column;
  align-items: center;
  width: 31px;
  border-right: 2px solid #303030;
}
.rail-logo {
  align-self: flex-start;
  align-items: flex-start;
  width: 34px;
  height: 32px;
  z-index: 1;
}
.rail-logo svg {
  width: 34px;
  height: 34px;
}
.rail-list {
  flex: 1;
  display: grid;
  grid-auto-rows: 1fr;
  color: #e6e6e6;
  font-size: 9px;
}
.rail-list .brand {
  color: #6385c4;
  font-size: 8px;
}
.gear {
  width: 20px;
  height: 174px;
  padding-top: 142px;
}
.gear svg {
  width: 20px;
  height: 20px;
}
.commands {
  display: flex;
  gap: 1px;
  width: 86px;
  padding: 5px 1px 68px 2px;
  border-right: 2px solid #2c2c2c;
}
.command-col {
  flex: 1;
  display: grid;
  grid-template-rows: repeat(19, 1fr);
}
.command-col.groups {
  flex: none;
  width: 27px;
}
.command-col button {
  border: solid #2b2b2b;
  border-width: 0 1px 1px 0;
}

/* Viewport */
.stage {
  flex: 1;
  display: flex;
  flex-direction: column;
  min-width: 0;
}
.viewport {
  position: relative;
  flex: 1;
  border: 1px solid #85702a;
  background: #383838;
}
.scene {
  position: absolute;
  width: 100%;
  height: 100%;
}
.wire {
  fill: none;
  stroke: #4e71ab;
}
.pane {
  stroke: #5b9bc4;
}
.viewport-label {
  position: absolute;
  top: 2px;
  left: 4px;
  display: flex;
  gap: 5px;
}
.timeline {
  display: flex;
  height: 14px;
  gap: 1px;
  padding: 0 0 2px 1px;
}
.timeline button {
  width: 10px;
  border: 1px solid #2a2a2a;
  border-width: 0 1px 1px 0;
}
.timeline .frame {
  width: 85px;
}

/* Command panel */
.panel {
  display: flex;
  flex-direction: column;
  width: 255px;
  padding: 1px 2px 3px 3px;
}
.panel-tabs {
  display: flex;
  height: 18px;
  border-bottom: 1px solid #2a2a2a;
}
.panel-tabs button {
  width: 20px;
  border: solid #2a2a2a;
  border-width: 1px 1px 0 0;
  background: #3a3a3a;
}
.panel-tabs .active {
  background: #444;
}
.panel-tabs svg {
  width: 14px;
  height: 14px;
}
.panel-body {
  flex: 1;
  display: flex;
}
.panel-main {
  width: 126px;
  padding: 6px 9px 0 3px;
}
.panel-side {
  flex: 1;
  margin-top: 1px;
  border: solid #303030;
  border-width: 1px 1px 1px 2px;
}
.kinds {
  display: flex;
  justify-content: space-between;
  margin-left: 3px;
}
.kinds button {
  width: 16px;
  height: 14px;
}
.kinds svg {
  width: 13px;
  height: 13px;
}
.drop.wide {
  width: 112px;
  margin: 6px 0 4px 2px;
}
hr {
  margin: 0 -6px 4px -3px;
  border: 0;
  border-top: 1px solid #2a2a2a;
}
.rollup {
  margin-bottom: 4px;
}
.rollup.closed {
  margin-bottom: 3px;
  padding: 0;
  border: solid #2a2a2a;
  border-width: 0 1px;
}
.rollup h2 {
  position: relative;
  margin: 0 2px 0 3px;
  border: 1px solid #585858;
  background: #404040;
  line-height: 9px;
  text-align: center;
}
.rollup h2 span {
  position: absolute;
  left: 3px;
  font-weight: 700;
}
.rollup-body {
  margin-top: -6px;
  padding: 5px 1px 0;
  border: 1px solid #2a2a2a;
  border-top: 0;
}
input[type="checkbox"] {
  width: 8px;
  height: 8px;
  border: 1px solid #222;
  background: #3c3c3c;
  appearance: none;
}
.check, .start {
  display: flex;
  align-items: center;
  gap: 5px;
  height: 13px;
  padding-left: 22px;
}
.start {
  height: 16px;
  padding-right: 3px;
}
.start button {
  flex: 1;
  height: 15px;
  border: solid #2a2a2a;
  border-width: 0 1px 1px 0;
}
.type-grid {
  display: grid;
  grid-template-columns: 1fr 1fr;
  gap: 3px;
  padding: 1px 0 1px;
}
.type-grid button {
  height: 12px;
  border: solid #262626;
  border-width: 0 1px 1px 0;
}
.name-row {
  display: flex;
  gap: 3px;
  padding: 11px 2px 5px 4px;
}
.rollup input[type="text"], .status label input, .frame-field input {
  height: 12px;
  padding: 0 2px;
  border: 1px solid #222;
  background: #555;
}
.rollup .name-row input[type="text"] {
  flex: 1;
  height: 14px;
  font-weight: 700;
}
.swatch {
  width: 13px;
  height: 14px;
  border: 1px solid #222;
  background: #8c4200;
}
.params {
  padding: 11px 9px 0;
}
.params label {
  display: flex;
  align-items: center;
  justify-content: flex-end;
  gap: 1px;
  margin-bottom: 3px;
}
.params input {
  width: 38px;
}
.spin {
  display: flex;
  flex-direction: column;
  align-items: center;
  gap: 2px;
  width: 9px;
  margin-left: 1px;
}
.spin::before, .spin::after {
  content: "";
  border: 2px solid transparent;
  border-bottom: 3px solid #ccc;
  border-top: 0;
}
.spin::after {
  border-top: 3px solid #ccc;
  border-bottom: 0;
}
.method {
  display: flex;
  gap: 36px;
  padding: 9px 12px 3px;
}
.method label {
  display: flex;
  align-items: center;
  gap: 4px;
}
input[type="radio"] {
  width: 8px;
  height: 8px;
  border: 1px solid #222;
  border-radius: 50%;
  background: #3a3a3a;
  appearance: none;
}
input[type="radio"]:checked {
  background: radial-gradient(#fff 45%, #333 50%);
}

/* Status bar */
.status {
  display: flex;
  height: 34px;
  border-top: 1px solid #2a2a2a;
  font-family: Roboto, "Noto Sans CJK SC", sans-serif;
}
.listener {
  width: 69px;
}
.listener input {
  display: block;
  width: 100%;
  height: 16px;
  padding: 0 4px;
  border: 1px solid #999;
  background: #fff;
  color: #111;
  font-family: "Liberation Mono", monospace;
}
.listener .pink {
  background: #dcc3c8;
}
.messages {
  flex: 1;
  min-width: 0;
  margin-left: 5px;
}
.status-row {
  display: flex;
  align-items: center;
  height: 17px;
  gap: 4px;
}
.well {
  flex: 1;
  height: 16px;
  padding-left: 4px;
  border: solid #2c2c2c;
  border-width: 0 0 1px 1px;
  line-height: 16px;
  white-space: nowrap;
}
.status-row button {
  width: 14px;
  height: 14px;
}
.status svg {
  width: 13px;
  height: 13px;
}
.status-row label {
  display: flex;
  align-items: center;
  justify-content: space-between;
  width: 48px;
  margin-right: 5px;
}
.status-row label input {
  width: 40px;
  padding: 0 1px;
  color: #222;
}
.grid-info {
  width: 70px;
  margin-left: 4px;
}
.grid-info .well {
  padding-left: 3px;
}
.grid-info button {
  width: 100%;
  height: 17px;
  padding-left: 4px;
  justify-content: flex-start;
}
.status .key {
  width: 28px;
  height: 31px;
  margin: 0 2px;
  border: solid #2a2a2a;
  border-width: 0 1px 1px 0;
}
.status .key svg {
  width: 20px;
  height: 10px;
}
.keys {
  width: 46px;
  padding-top: 1px;
}
.keys button {
  width: 100%;
  height: 15px;
  border: solid #2a2a2a;
  border-width: 0 1px 1px 0;
}
.keys .drop {
  width: 100%;
}
.keys.filters {
  width: 78px;
  margin: 0 8px 0 2px;
}
.filter-row {
  display: grid;
  grid-template-columns: 16px 1fr;
  padding-top: 2px;
}
.playback {
  display: grid;
  grid-template-columns: repeat(9, 1fr);
  width: 153px;
  padding-right: 4px;
}
.playback button {
  height: 16px;
}
.frame-field {
  grid-column: span 3;
  display: flex;
  align-items: center;
}
.frame-field input {
  flex: 1;
}
```
